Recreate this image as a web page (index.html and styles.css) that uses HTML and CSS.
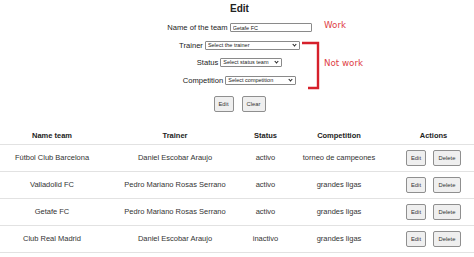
FILE: index.html
```html
<!DOCTYPE html>
<html lang="en">
<head>
  <meta charset="UTF-8" />
  <meta name="viewport" content="width=device-width, initial-scale=1.0" />
  <title>Teams</title>
  <link rel="stylesheet" href="styles.css">
</head>
<body>

  <div class="edit-form">
    <h1>Edit</h1>

    <div class="form-row">
      <label for="teamName">Name of the team</label>
      <input type="text" id="teamName" class="team-input" value="Getafe FC" />
    </div>

    <div class="form-row">
      <label for="trainer">Trainer</label>
      <span class="select-wrap">
        <select id="trainer" class="trainer-select">
          <option>Select the trainer</option>
        </select>
      </span>
    </div>

    <div class="form-row">
      <label for="status">Status</label>
      <span class="select-wrap">
        <select id="status" class="status-select">
          <option>Select status team</option>
        </select>
      </span>
    </div>

    <div class="form-row">
      <label for="competition">Competition</label>
      <span class="select-wrap">
        <select id="competition" class="competition-select">
          <option>Select competition</option>
        </select>
      </span>
    </div>

    <div class="form-buttons">
      <button class="btn">Edit</button>
      <button class="btn">Clear</button>
    </div>

    <!-- annotations -->
    <span class="note note-work">Work</span>
    <svg class="bracket" width="24" height="50" viewBox="0 0 24 50">
      <path d="M2 2 H18 V47 H8" fill="none" stroke="#d6202b" stroke-width="2.4" />
    </svg>
    <span class="note note-notwork">Not work</span>
  </div>

  <table class="teams">
    <colgroup>
      <col style="width: 104px">
      <col style="width: 142px">
      <col style="width: 39px">
      <col style="width: 108px">
      <col style="width: 81px">
    </colgroup>
    <thead>
      <tr>
        <th>Name team</th>
        <th>Trainer</th>
        <th>Status</th>
        <th>Competition</th>
        <th>Actions</th>
      </tr>
    </thead>
    <tbody>
      <tr>
        <td>Fútbol Club Barcelona</td>
        <td>Daniel Escobar Araujo</td>
        <td>activo</td>
        <td>torneo de campeones</td>
        <td class="actions"><button class="btn small">Edit</button><button class="btn small">Delete</button></td>
      </tr>
      <tr>
        <td>Valladolid FC</td>
        <td>Pedro Mariano Rosas Serrano</td>
        <td>activo</td>
        <td>grandes ligas</td>
        <td class="actions"><button class="btn small">Edit</button><button class="btn small">Delete</button></td>
      </tr>
      <tr>
        <td>Getafe FC</td>
        <td>Pedro Mariano Rosas Serrano</td>
        <td>activo</td>
        <td>grandes ligas</td>
        <td class="actions"><button class="btn small">Edit</button><button class="btn small">Delete</button></td>
      </tr>
      <tr>
        <td>Club Real Madrid</td>
        <td>Daniel Escobar Araujo</td>
        <td>inactivo</td>
        <td>grandes ligas</td>
        <td class="actions"><button class="btn small">Edit</button><button class="btn small">Delete</button></td>
      </tr>
    </tbody>
  </table>

</body>
</html>
```

FILE: styles.css
```css
* {
  box-sizing: border-box;
}

body {
  font-family: "Liberation Sans", Arial, sans-serif;
  margin: 0;
  padding: 0;
  color: #222;
  background: #fff;
  overflow: hidden;
}

.edit-form {
  position: relative;
  display: flex;
  flex-direction: column;
  align-items: center;
  padding-left: 5px;
}

h1 {
  font-size: 10px;
  font-weight: bold;
  margin: 0;
  height: 19px;
  line-height: 18px;
}

.form-row {
  display: flex;
  align-items: center;
  justify-content: center;
  gap: 2px;
  height: 17.5px;
  font-size: 7.6px;
}

.team-input,
select {
  font-family: "Liberation Sans", Arial, sans-serif;
  font-size: 5.5px;
  height: 9px;
  padding: 0 2px;
  border: 1px solid #8a8a8a;
  border-radius: 1px;
  background: #fff;
  color: #222;
  outline: none;
}

select {
  appearance: none;
  -webkit-appearance: none;
  padding-right: 8px;
  line-height: 7px;
}

/* small chevron in place of the native arrow */
.select-wrap {
  position: relative;
  display: flex;
}

.select-wrap::after {
  content: "";
  position: absolute;
  right: 4px;
  top: 2.2px;
  width: 2px;
  height: 2px;
  border-right: 1.2px solid #222;
  border-bottom: 1.2px solid #222;
  transform: rotate(45deg);
  pointer-events: none;
}

.team-input {
  width: 82px;
}

.trainer-select {
  width: 95px;
}

.status-select {
  width: 62px;
}

.competition-select {
  width: 71px;
}

.form-buttons {
  display: flex;
  gap: 8px;
  margin-top: 7px;
}

.btn {
  font-family: "Liberation Sans", Arial, sans-serif;
  font-size: 5.8px;
  height: 16px;
  padding: 0 3px;
  background: #efefef;
  color: #333;
  border: 1px solid #8f8f8f;
  border-radius: 2px;
}

.form-buttons .btn:first-child {
  width: 20px;
}

.form-buttons .btn:last-child {
  width: 24px;
}

.note {
  position: absolute;
  left: 324px;
  font-family: "DejaVu Sans", sans-serif;
  font-size: 8.7px;
  color: #de4046;
  line-height: 10px;
}

.note-work {
  top: 20px;
}

.note-notwork {
  top: 58px;
}

.bracket {
  position: absolute;
  left: 300px;
  top: 41px;
}

.teams {
  width: 474px;
  margin-top: 16px;
  border-collapse: collapse;
  table-layout: fixed;
  font-size: 7.5px;
  color: #333;
}

.teams th {
  height: 16px;
  font-weight: bold;
  color: #222;
  text-align: center;
  vertical-align: middle;
  padding: 0;
  border-bottom: 1px solid #e2e2e2;
}

.teams td {
  height: 27px;
  text-align: center;
  vertical-align: middle;
  padding: 0;
  border-bottom: 1px solid #e2e2e2;
}

.actions {
  white-space: nowrap;
}

.btn.small {
  height: 16px;
  padding: 0;
  margin: 0 3.5px;
}

.btn.small:first-child {
  width: 20px;
}

.btn.small:last-child {
  width: 28px;
}
```
